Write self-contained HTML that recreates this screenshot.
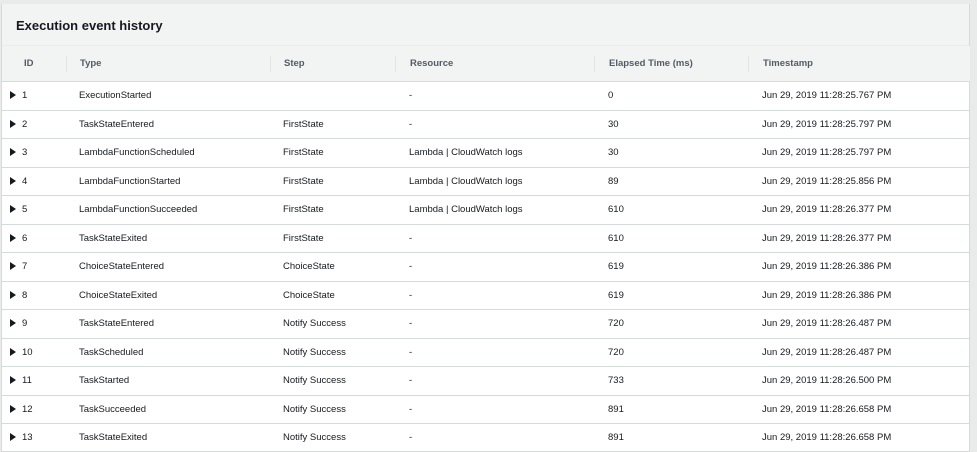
<!DOCTYPE html>
<html style="overflow:hidden;height:452px"><head><style>
*{margin:0;padding:0;box-sizing:border-box}
body{width:977px;height:452px;background:#e9ebeb;font-family:"Liberation Sans",sans-serif;color:#16191f;overflow:hidden;position:relative}
.card{position:absolute;left:1px;top:4px;width:969px;height:448px;background:#fff;border:1px solid #d5dbdb;border-top:none}
.hd{height:42px;background:#f2f3f3;border-bottom:1px solid #eaeded;padding:14px 0 0 14px;font-size:13px;font-weight:bold;color:#16191f}
.th{position:absolute;top:42px;left:0;width:968px;height:36px;background:#f2f3f3;border-bottom:1px solid #d5dbdb;font-size:9.5px;font-weight:bold;color:#545b64}
.th span,.r span{position:absolute;top:0;line-height:36px;white-space:nowrap}
.th i{position:absolute;top:10px;width:1px;height:16px;background:#e1e4e4}
.r{position:absolute;left:0;width:968px;height:28.5px;border-bottom:1px solid #d5dbdb;font-size:9.5px}
.r span{line-height:28px}
.tri{display:inline-block;width:0;height:0;border-left:6px solid #16191f;border-top:4px solid transparent;border-bottom:4px solid transparent;margin-right:6px;vertical-align:-1px}
</style></head><body>
<div class="card">
<div class="hd">Execution event history</div>
<div class="th">
<span style="left:22px">ID</span><i style="left:64px"></i>
<span style="left:78px">Type</span><i style="left:268px"></i>
<span style="left:282px">Step</span><i style="left:393px"></i>
<span style="left:408px">Resource</span><i style="left:592px"></i>
<span style="left:607px">Elapsed Time (ms)</span><i style="left:746px"></i>
<span style="left:761px">Timestamp</span>
</div>
</div>
<div style="position:absolute;left:1px;top:82px">
<div class="r" style="top:0"><span style="left:9px"><b class="tri"></b>1</span><span style="left:78px">ExecutionStarted</span><span style="left:282px"></span><span style="left:408px">-</span><span style="left:607px">0</span><span style="left:761px">Jun 29, 2019 11:28:25.767 PM</span></div>
<div class="r" style="top:28.5px"><span style="left:9px"><b class="tri"></b>2</span><span style="left:78px">TaskStateEntered</span><span style="left:282px">FirstState</span><span style="left:408px">-</span><span style="left:607px">30</span><span style="left:761px">Jun 29, 2019 11:28:25.797 PM</span></div>
<div class="r" style="top:57px"><span style="left:9px"><b class="tri"></b>3</span><span style="left:78px">LambdaFunctionScheduled</span><span style="left:282px">FirstState</span><span style="left:408px">Lambda | CloudWatch logs</span><span style="left:607px">30</span><span style="left:761px">Jun 29, 2019 11:28:25.797 PM</span></div>
<div class="r" style="top:85.5px"><span style="left:9px"><b class="tri"></b>4</span><span style="left:78px">LambdaFunctionStarted</span><span style="left:282px">FirstState</span><span style="left:408px">Lambda | CloudWatch logs</span><span style="left:607px">89</span><span style="left:761px">Jun 29, 2019 11:28:25.856 PM</span></div>
<div class="r" style="top:114px"><span style="left:9px"><b class="tri"></b>5</span><span style="left:78px">LambdaFunctionSucceeded</span><span style="left:282px">FirstState</span><span style="left:408px">Lambda | CloudWatch logs</span><span style="left:607px">610</span><span style="left:761px">Jun 29, 2019 11:28:26.377 PM</span></div>
<div class="r" style="top:142.5px"><span style="left:9px"><b class="tri"></b>6</span><span style="left:78px">TaskStateExited</span><span style="left:282px">FirstState</span><span style="left:408px">-</span><span style="left:607px">610</span><span style="left:761px">Jun 29, 2019 11:28:26.377 PM</span></div>
<div class="r" style="top:171px"><span style="left:9px"><b class="tri"></b>7</span><span style="left:78px">ChoiceStateEntered</span><span style="left:282px">ChoiceState</span><span style="left:408px">-</span><span style="left:607px">619</span><span style="left:761px">Jun 29, 2019 11:28:26.386 PM</span></div>
<div class="r" style="top:199.5px"><span style="left:9px"><b class="tri"></b>8</span><span style="left:78px">ChoiceStateExited</span><span style="left:282px">ChoiceState</span><span style="left:408px">-</span><span style="left:607px">619</span><span style="left:761px">Jun 29, 2019 11:28:26.386 PM</span></div>
<div class="r" style="top:228px"><span style="left:9px"><b class="tri"></b>9</span><span style="left:78px">TaskStateEntered</span><span style="left:282px">Notify Success</span><span style="left:408px">-</span><span style="left:607px">720</span><span style="left:761px">Jun 29, 2019 11:28:26.487 PM</span></div>
<div class="r" style="top:256.5px"><span style="left:9px"><b class="tri"></b>10</span><span style="left:78px">TaskScheduled</span><span style="left:282px">Notify Success</span><span style="left:408px">-</span><span style="left:607px">720</span><span style="left:761px">Jun 29, 2019 11:28:26.487 PM</span></div>
<div class="r" style="top:285px"><span style="left:9px"><b class="tri"></b>11</span><span style="left:78px">TaskStarted</span><span style="left:282px">Notify Success</span><span style="left:408px">-</span><span style="left:607px">733</span><span style="left:761px">Jun 29, 2019 11:28:26.500 PM</span></div>
<div class="r" style="top:313.5px"><span style="left:9px"><b class="tri"></b>12</span><span style="left:78px">TaskSucceeded</span><span style="left:282px">Notify Success</span><span style="left:408px">-</span><span style="left:607px">891</span><span style="left:761px">Jun 29, 2019 11:28:26.658 PM</span></div>
<div class="r" style="top:342px"><span style="left:9px"><b class="tri"></b>13</span><span style="left:78px">TaskStateExited</span><span style="left:282px">Notify Success</span><span style="left:408px">-</span><span style="left:607px">891</span><span style="left:761px">Jun 29, 2019 11:28:26.658 PM</span></div>
</div>
</body></html>
